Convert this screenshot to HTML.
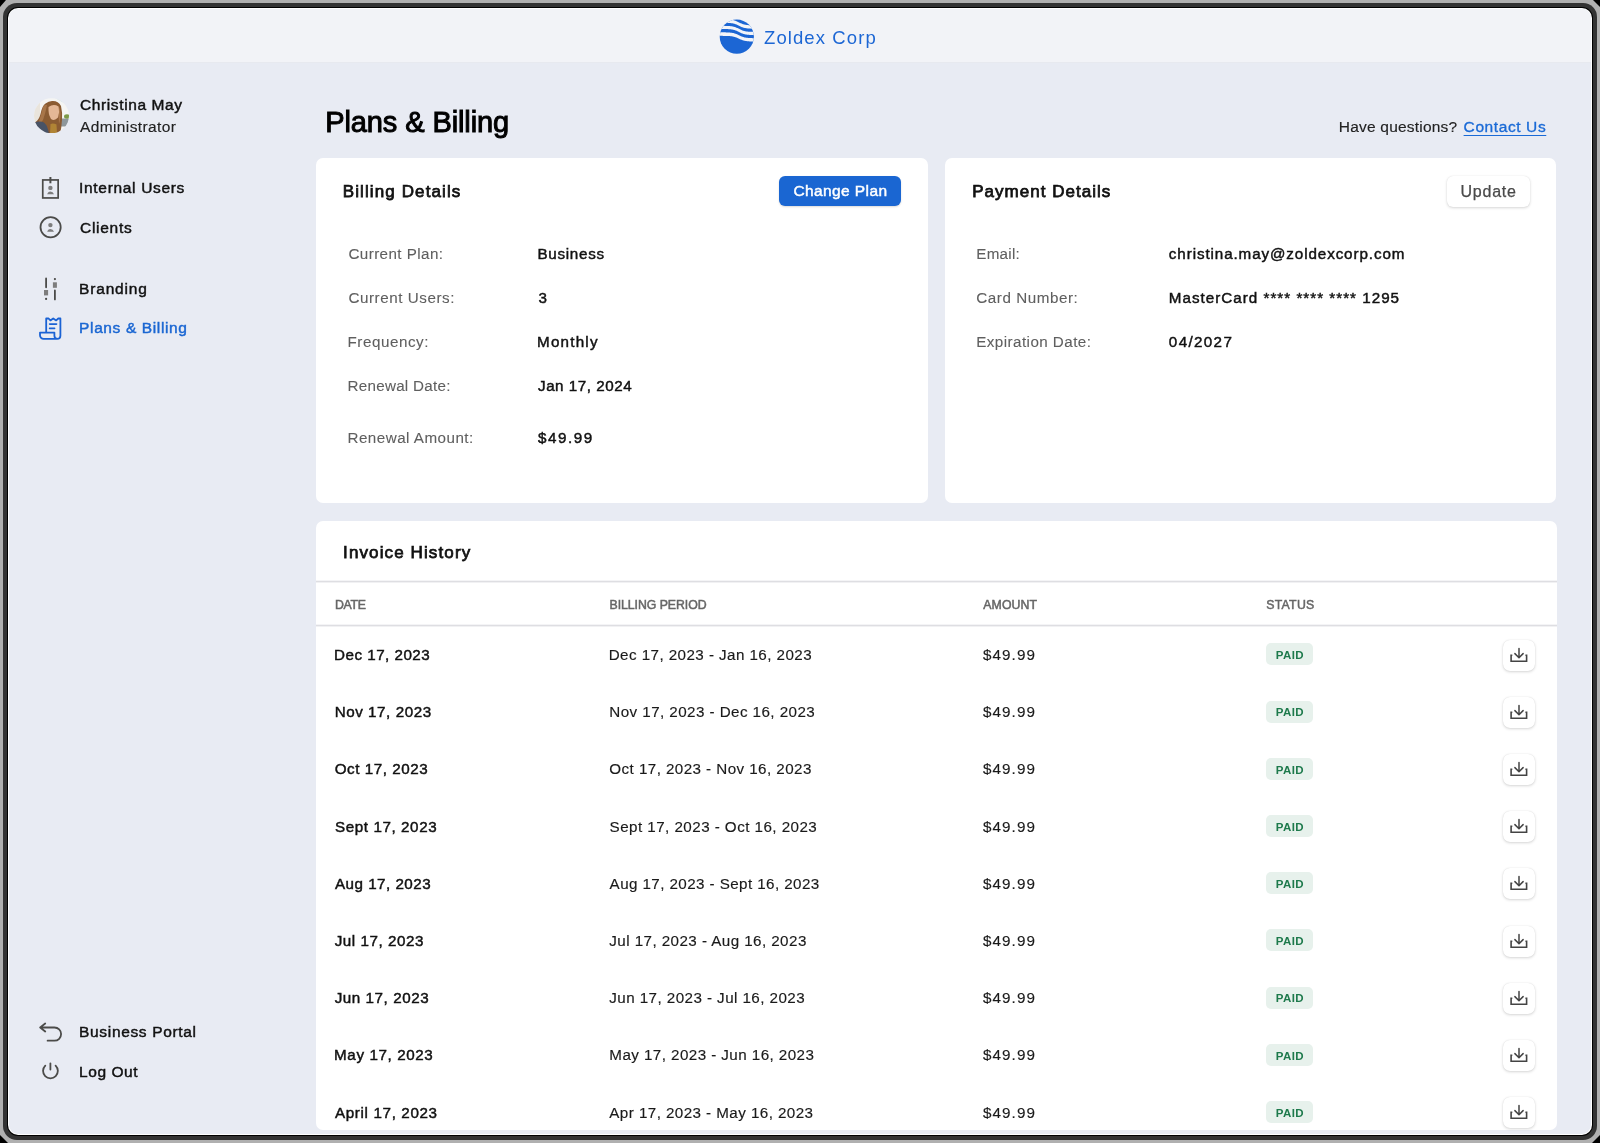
<!DOCTYPE html>
<html><head><meta charset="utf-8">
<style>
*{box-sizing:border-box;margin:0;padding:0}
html,body{width:1600px;height:1143px;overflow:hidden;background:#fff;font-family:"Liberation Sans",sans-serif;color:#111}
#shadow{position:absolute;left:0;top:0;width:1600px;height:1143px;background:#b0b0b0}
#shadow2{position:absolute;left:3px;top:3px;width:1594px;height:1137px;border-radius:14px;background:#333}
#frame{position:absolute;left:7px;top:7px;width:1586px;height:1129px;border-radius:11px;background:#000}
#win{position:absolute;left:8px;top:8px;width:1584px;height:1127px;border-radius:10px;background:#fff}
#app{position:absolute;left:9px;top:9px;width:1582px;height:1125px;border-radius:9px;background:#e8ebf3;overflow:hidden}
.corner{position:absolute;width:0;height:0}
#hdr{position:absolute;left:0;top:0;width:1582px;height:54px;background:#f2f3f7;border-bottom:1px solid #e7e9ef}
#content{position:absolute;left:0;top:0;width:1600px;height:1143px;clip-path:inset(9px 9px 9px 9px round 9px);will-change:transform}
.t{position:absolute;white-space:nowrap;line-height:1}
.logo{color:#1c66d4}
.nav{-webkit-text-stroke:0.45px #111;color:#111}
.nav.blue{color:#1a66d2;-webkit-text-stroke:0.45px #1a66d2}
.sub{color:#222;-webkit-text-stroke:0.15px #222}
.link{color:#1a6ad6;text-decoration:underline;text-underline-offset:2.5px;text-decoration-thickness:1.25px;-webkit-text-stroke:0.35px #1a6ad6}
.title{-webkit-text-stroke:1px #000;color:#000}
.card{position:absolute;background:#fff;border-radius:7px}
.ctitle{-webkit-text-stroke:0.75px #111;color:#111}
.lbl{color:#5f5f5f;-webkit-text-stroke:0.1px #5f5f5f}
.val{-webkit-text-stroke:0.45px #111;color:#111}
.th{color:#666;-webkit-text-stroke:0.5px #666}
.rd{-webkit-text-stroke:0.45px #111;color:#111}
.rp{color:#1a1a1a;-webkit-text-stroke:0.15px #1a1a1a}
.btn{position:absolute;background:#1a66d2;border-radius:6px;box-shadow:0 1px 2px rgba(0,0,0,0.15)}
.btnt{color:#fff;-webkit-text-stroke:0.45px #fff}
.btn2{position:absolute;background:#fff;border-radius:6px;box-shadow:0 1px 3px rgba(0,0,0,0.16),0 0 1px rgba(0,0,0,0.1)}
.btn2t{color:#4a4a4a;-webkit-text-stroke:0.25px #4a4a4a}
.badge{position:absolute;width:47px;height:22px;border-radius:5px;background:#e7f1ec}
.badget{color:#1e7a4c;font-weight:700}
.dl{position:absolute;width:32px;height:31px;border-radius:7px;background:#fff;box-shadow:0 1px 3px rgba(0,0,0,0.16),0 0 1px rgba(0,0,0,0.12)}
.dl svg{position:absolute;left:0;top:0}
.hr{position:absolute;height:1px;background:#dedee2;box-shadow:0 1px 0 #f1f1f3,0 -1px 0 #f4f4f6}
.ic{position:absolute;left:0;top:0}
.logo{font-size:18.5px;letter-spacing:0.3px;color:#1c66d4}
.avatar{position:absolute;width:35px;height:35.5px;border-radius:50%;overflow:hidden;background:radial-gradient(circle at 55% 45%,#e8c4a8 0,#d9a784 18%,#8a5a34 34%,#6b4526 50%,transparent 51%),linear-gradient(90deg,#f4f4f2 0,#f0f0ee 60%,#dfe6e6 100%)}
</style></head>
<body>
<div id="shadow"></div><svg style="position:absolute;left:0;top:0" width="1600" height="1143"><polygon points="0,0 6,0 0,7" fill="#000"/><polygon points="1593,0 1600,0 1600,7" fill="#000"/><polygon points="0,1135 0,1143 8,1143" fill="#000"/><polygon points="1600,1135 1600,1143 1592,1143" fill="#000"/></svg><div id="shadow2"></div>
<div id="frame"></div>
<div id="win"></div>
<div id="app"><div id="hdr"></div></div>
<div id="content">
<svg class="ic" style="left:715px;top:15px" width="45" height="43" viewBox="0 0 45 43"><defs><clipPath id="lc"><circle cx="21.8" cy="21.7" r="17.1"/></clipPath></defs><g clip-path="url(#lc)"><rect x="0" y="0" width="45" height="43" fill="#1c66d4"/><polygon points="0.0,4.40 0.5,4.40 1.0,4.40 1.5,4.40 2.0,4.40 2.5,4.40 3.0,4.41 3.5,4.41 4.0,4.41 4.5,4.41 5.0,4.41 5.5,4.41 6.0,4.41 6.5,4.42 7.0,4.42 7.5,4.42 8.0,4.43 8.5,4.43 9.0,4.44 9.5,4.45 10.0,4.46 10.5,4.47 11.0,4.48 11.5,4.49 12.0,4.51 12.5,4.53 13.0,4.55 13.5,4.58 14.0,4.61 14.5,4.64 15.0,4.68 15.5,4.73 16.0,4.79 16.5,4.86 17.0,4.93 17.5,5.02 18.0,5.12 18.5,5.23 19.0,5.35 19.5,5.49 20.0,5.65 20.5,5.82 21.0,6.01 21.5,6.22 22.0,6.44 22.5,6.67 23.0,6.90 23.5,7.15 24.0,7.40 24.5,7.65 25.0,7.90 25.5,8.13 26.0,8.36 26.5,8.58 27.0,8.79 27.5,8.98 28.0,9.15 28.5,9.31 29.0,9.45 29.5,9.57 30.0,9.68 30.5,9.78 31.0,9.87 31.5,9.94 32.0,10.01 32.5,10.07 33.0,10.12 33.5,10.16 34.0,10.19 34.5,10.22 35.0,10.25 35.5,10.27 36.0,10.29 36.5,10.31 37.0,10.32 37.5,10.33 38.0,10.34 38.5,10.35 39.0,10.36 39.5,10.37 40.0,10.37 40.5,10.38 41.0,10.38 41.5,10.38 42.0,10.39 42.5,10.39 43.0,10.39 43.5,10.39 44.0,10.39 44.5,10.39 44.5,13.73 44.0,13.73 43.5,13.73 43.0,13.73 42.5,13.73 42.0,13.73 41.5,13.72 41.0,13.72 40.5,13.72 40.0,13.71 39.5,13.71 39.0,13.70 38.5,13.69 38.0,13.68 37.5,13.67 37.0,13.66 36.5,13.65 36.0,13.63 35.5,13.61 35.0,13.59 34.5,13.56 34.0,13.53 33.5,13.50 33.0,13.46 32.5,13.41 32.0,13.35 31.5,13.28 31.0,13.21 30.5,13.12 30.0,13.02 29.5,12.91 29.0,12.79 28.5,12.65 28.0,12.49 27.5,12.32 27.0,12.13 26.5,11.92 26.0,11.70 25.5,11.47 25.0,11.24 24.5,10.99 24.0,10.74 23.5,10.49 23.0,10.24 22.5,10.01 22.0,9.78 21.5,9.56 21.0,9.35 20.5,9.16 20.0,8.99 19.5,8.83 19.0,8.69 18.5,8.57 18.0,8.46 17.5,8.36 17.0,8.27 16.5,8.20 16.0,8.13 15.5,8.07 15.0,8.02 14.5,7.98 14.0,7.95 13.5,7.92 13.0,7.89 12.5,7.87 12.0,7.85 11.5,7.83 11.0,7.82 10.5,7.81 10.0,7.80 9.5,7.79 9.0,7.78 8.5,7.77 8.0,7.77 7.5,7.76 7.0,7.76 6.5,7.76 6.0,7.75 5.5,7.75 5.0,7.75 4.5,7.75 4.0,7.75 3.5,7.75 3.0,7.75 2.5,7.74 2.0,7.74 1.5,7.74 1.0,7.74 0.5,7.74 0.0,7.74" fill="#f3f4f8"/><polygon points="0.0,10.82 0.5,10.82 1.0,10.82 1.5,10.82 2.0,10.82 2.5,10.82 3.0,10.83 3.5,10.83 4.0,10.83 4.5,10.83 5.0,10.83 5.5,10.83 6.0,10.84 6.5,10.84 7.0,10.84 7.5,10.84 8.0,10.85 8.5,10.85 9.0,10.86 9.5,10.87 10.0,10.88 10.5,10.89 11.0,10.90 11.5,10.91 12.0,10.93 12.5,10.95 13.0,10.97 13.5,11.00 14.0,11.03 14.5,11.07 15.0,11.11 15.5,11.16 16.0,11.22 16.5,11.28 17.0,11.36 17.5,11.45 18.0,11.55 18.5,11.66 19.0,11.79 19.5,11.93 20.0,12.09 20.5,12.27 21.0,12.46 21.5,12.67 22.0,12.89 22.5,13.12 23.0,13.37 23.5,13.62 24.0,13.87 24.5,14.12 25.0,14.37 25.5,14.62 26.0,14.85 26.5,15.07 27.0,15.28 27.5,15.47 28.0,15.65 28.5,15.81 29.0,15.95 29.5,16.08 30.0,16.19 30.5,16.29 31.0,16.38 31.5,16.46 32.0,16.52 32.5,16.58 33.0,16.63 33.5,16.67 34.0,16.71 34.5,16.74 35.0,16.77 35.5,16.79 36.0,16.81 36.5,16.83 37.0,16.84 37.5,16.85 38.0,16.86 38.5,16.87 39.0,16.88 39.5,16.89 40.0,16.89 40.5,16.90 41.0,16.90 41.5,16.90 42.0,16.90 42.5,16.91 43.0,16.91 43.5,16.91 44.0,16.91 44.5,16.91 44.5,20.06 44.0,20.06 43.5,20.06 43.0,20.06 42.5,20.06 42.0,20.05 41.5,20.05 41.0,20.05 40.5,20.05 40.0,20.04 39.5,20.04 39.0,20.03 38.5,20.02 38.0,20.01 37.5,20.00 37.0,19.99 36.5,19.98 36.0,19.96 35.5,19.94 35.0,19.92 34.5,19.89 34.0,19.86 33.5,19.82 33.0,19.78 32.5,19.73 32.0,19.67 31.5,19.61 31.0,19.53 30.5,19.44 30.0,19.34 29.5,19.23 29.0,19.10 28.5,18.96 28.0,18.80 27.5,18.62 27.0,18.43 26.5,18.22 26.0,18.00 25.5,17.77 25.0,17.52 24.5,17.27 24.0,17.02 23.5,16.77 23.0,16.52 22.5,16.27 22.0,16.04 21.5,15.82 21.0,15.61 20.5,15.42 20.0,15.24 19.5,15.08 19.0,14.94 18.5,14.81 18.0,14.70 17.5,14.60 17.0,14.51 16.5,14.43 16.0,14.37 15.5,14.31 15.0,14.26 14.5,14.22 14.0,14.18 13.5,14.15 13.0,14.12 12.5,14.10 12.0,14.08 11.5,14.06 11.0,14.05 10.5,14.04 10.0,14.03 9.5,14.02 9.0,14.01 8.5,14.00 8.0,14.00 7.5,13.99 7.0,13.99 6.5,13.99 6.0,13.99 5.5,13.98 5.0,13.98 4.5,13.98 4.0,13.98 3.5,13.98 3.0,13.98 2.5,13.97 2.0,13.97 1.5,13.97 1.0,13.97 0.5,13.97 0.0,13.97" fill="#f3f4f8"/><polygon points="0.0,17.30 0.5,17.30 1.0,17.30 1.5,17.30 2.0,17.30 2.5,17.30 3.0,17.31 3.5,17.31 4.0,17.31 4.5,17.31 5.0,17.31 5.5,17.31 6.0,17.31 6.5,17.32 7.0,17.32 7.5,17.32 8.0,17.33 8.5,17.33 9.0,17.34 9.5,17.35 10.0,17.35 10.5,17.36 11.0,17.38 11.5,17.39 12.0,17.41 12.5,17.42 13.0,17.45 13.5,17.47 14.0,17.50 14.5,17.54 15.0,17.58 15.5,17.63 16.0,17.68 16.5,17.75 17.0,17.82 17.5,17.91 18.0,18.00 18.5,18.11 19.0,18.24 19.5,18.38 20.0,18.53 20.5,18.70 21.0,18.89 21.5,19.09 22.0,19.30 22.5,19.53 23.0,19.76 23.5,20.00 24.0,20.25 24.5,20.50 25.0,20.74 25.5,20.97 26.0,21.20 26.5,21.41 27.0,21.61 27.5,21.80 28.0,21.97 28.5,22.12 29.0,22.26 29.5,22.39 30.0,22.50 30.5,22.59 31.0,22.68 31.5,22.75 32.0,22.82 32.5,22.87 33.0,22.92 33.5,22.96 34.0,23.00 34.5,23.03 35.0,23.05 35.5,23.08 36.0,23.09 36.5,23.11 37.0,23.12 37.5,23.14 38.0,23.15 38.5,23.15 39.0,23.16 39.5,23.17 40.0,23.17 40.5,23.18 41.0,23.18 41.5,23.18 42.0,23.19 42.5,23.19 43.0,23.19 43.5,23.19 44.0,23.19 44.5,23.19 44.5,26.54 44.0,26.54 43.5,26.54 43.0,26.54 42.5,26.54 42.0,26.54 41.5,26.53 41.0,26.53 40.5,26.53 40.0,26.52 39.5,26.52 39.0,26.51 38.5,26.50 38.0,26.50 37.5,26.49 37.0,26.48 36.5,26.46 36.0,26.45 35.5,26.43 35.0,26.41 34.5,26.38 34.0,26.35 33.5,26.32 33.0,26.28 32.5,26.23 32.0,26.18 31.5,26.12 31.0,26.05 30.5,25.96 30.0,25.87 29.5,25.76 29.0,25.64 28.5,25.51 28.0,25.36 27.5,25.20 27.0,25.02 26.5,24.82 26.0,24.62 25.5,24.40 25.0,24.17 24.5,23.94 24.0,23.70 23.5,23.46 23.0,23.23 22.5,23.00 22.0,22.78 21.5,22.58 21.0,22.38 20.5,22.20 20.0,22.04 19.5,21.89 19.0,21.76 18.5,21.64 18.0,21.53 17.5,21.44 17.0,21.35 16.5,21.28 16.0,21.22 15.5,21.17 15.0,21.12 14.5,21.08 14.0,21.05 13.5,21.02 13.0,20.99 12.5,20.97 12.0,20.95 11.5,20.94 11.0,20.92 10.5,20.91 10.0,20.90 9.5,20.90 9.0,20.89 8.5,20.88 8.0,20.88 7.5,20.87 7.0,20.87 6.5,20.87 6.0,20.86 5.5,20.86 5.0,20.86 4.5,20.86 4.0,20.86 3.5,20.86 3.0,20.86 2.5,20.85 2.0,20.85 1.5,20.85 1.0,20.85 0.5,20.85 0.0,20.85" fill="#f3f4f8"/></g></svg>
<div id="logo" class="t logo" style="left:764.00px;top:29.34px;font-size:18.5px;letter-spacing:1.093px;">Zoldex Corp</div>
<svg class="ic" style="left:33.5px;top:97.5px" width="35" height="35.5" viewBox="0 0 35 35.5"><defs><clipPath id="av"><circle cx="17.5" cy="17.75" r="17.5"/></clipPath><filter id="avb" x="-10%" y="-10%" width="120%" height="120%"><feGaussianBlur stdDeviation="0.5"/></filter></defs><g clip-path="url(#av)"><rect width="35" height="36" fill="#f5f5f3"/><g filter="url(#avb)"><rect x="0" y="0" width="6" height="36" fill="#e9e4dc"/><path d="M21 0H35V7L28 4Z" fill="#cfe3e3"/><path d="M27 20.5H35V28.5H27Z" fill="#8e979b"/><ellipse cx="33" cy="18.5" rx="3" ry="2.2" fill="#7c9a48"/><path d="M18 3Q24 2.5 27 8Q28.5 14 28 22Q27.5 30 26 36H2Q0.5 30 1 24.5Q5 22 6.5 16Q8 8 11.5 5.5Q14.5 3.2 18 3Z" fill="#8b5b33"/><path d="M9 9Q11 6 13 7Q11.5 15 9 22Q6.5 26 3.5 27Q6.5 20 9 9Z" fill="#a8764a"/><path d="M24.5 8Q27 12 26.5 19Q26 24 25 26Q24.5 18 24.5 8Z" fill="#a8764a"/><path d="M14.5 9Q19.5 5.5 24.5 8.5Q26 14 24 19.5Q20.5 23.5 17 21Q14 16 14.5 9Z" fill="#e4b896"/><path d="M0 25Q5 22.5 10 24.5Q14 28 15 36H0Z" fill="#4a5366"/><path d="M16.5 26Q19.5 25 22.5 26.5L23 36H16Z" fill="#b08436"/></g></g></svg>
<div id="cm" class="t nav" style="left:80.00px;top:96.88px;font-size:15.5px;letter-spacing:0.613px;">Christina May</div>
<div id="adm" class="t sub" style="left:80.00px;top:118.63px;font-size:15.5px;letter-spacing:0.387px;">Administrator</div>
<div id="n1" class="t nav" style="left:79.10px;top:180.08px;font-size:15.5px;letter-spacing:0.673px;">Internal Users</div>
<div id="n2" class="t nav" style="left:80.00px;top:219.68px;font-size:15.5px;letter-spacing:0.725px;">Clients</div>
<div id="n3" class="t nav" style="left:79.10px;top:281.08px;font-size:15.5px;letter-spacing:0.821px;">Branding</div>
<div id="n4" class="t nav blue" style="left:79.10px;top:320.48px;font-size:15.5px;letter-spacing:0.625px;">Plans &amp; Billing</div>
<div id="n5" class="t nav" style="left:79.10px;top:1024.38px;font-size:15.5px;letter-spacing:0.661px;">Business Portal</div>
<div id="n6" class="t nav" style="left:79.10px;top:1064.38px;font-size:15.5px;letter-spacing:0.538px;">Log Out</div>
<svg class="ic" style="left:36px;top:172px" width="30" height="30" viewBox="0 0 30 30"><rect x="6.75" y="7.95" width="15.4" height="18" fill="none" stroke="#4b4b49" stroke-width="1.7"/><path d="M14.4 5V11.3" stroke="#4b4b49" stroke-width="2"/><circle cx="14.4" cy="15.9" r="2.2" fill="#7d7d7d"/><path d="M11.2 22.3Q11.8 19.4 14.4 19.4Q17 19.4 18 22.3Z" fill="#7d7d7d"/></svg>
<svg class="ic" style="left:36px;top:212px" width="30" height="30" viewBox="0 0 30 30"><circle cx="14.6" cy="15.3" r="10.1" fill="none" stroke="#4b4b49" stroke-width="1.8"/><circle cx="14.4" cy="13.1" r="2.2" fill="#7d7d7d"/><path d="M11.2 19.8Q11.8 16.9 14.4 16.9Q17 16.9 18 19.8Z" fill="#7d7d7d"/></svg>
<svg class="ic" style="left:36px;top:274px" width="30" height="30" viewBox="0 0 30 30"><path d="M10.1 4.4V13.3M18.9 16.5V25.4" stroke="#4b4b49" stroke-width="1.8" stroke-linecap="round"/><rect x="8" y="16" width="4.1" height="5.4" fill="#7d7d7d"/><rect x="16.9" y="8.3" width="4" height="5.5" fill="#7d7d7d"/><circle cx="10.1" cy="24.9" r="1.1" fill="#4b4b49"/><circle cx="18.9" cy="5.1" r="1.1" fill="#4b4b49"/></svg>
<svg class="ic" style="left:36px;top:314px" width="30" height="30" viewBox="0 0 30 30"><path d="M10.2 18.6V4.5H12.6L14.4 6.4L17.2 4.4L20.2 6.4L22.3 4.5H24.4V21.7A3.2 3.2 0 0 1 21.2 24.9H7.6A3.6 3.6 0 0 1 4 21.3V18.6H18.4V21.7A3.2 3.2 0 0 0 21.2 24.9" fill="none" stroke="#1a62d4" stroke-width="1.8" stroke-linejoin="round"/><path d="M13.6 10.1H20.6M13.6 14.4H18.6" stroke="#1a62d4" stroke-width="1.6" stroke-linecap="round"/></svg>
<svg class="ic" style="left:34px;top:1016px" width="30" height="30" viewBox="0 0 30 30"><path d="M11.2 7.5L6.2 11.5L11.2 15.5M6.2 11.5H20.5A6.6 6.6 0 0 1 20.5 24.7H13.6" fill="none" stroke="#4b4b49" stroke-width="1.8" stroke-linecap="round" stroke-linejoin="round"/></svg>
<svg class="ic" style="left:34px;top:1056px" width="30" height="30" viewBox="0 0 30 30"><path d="M11.3 9.6A7.4 7.4 0 1 0 21.6 9.6M16.4 7.3V13.5" fill="none" stroke="#4b4b49" stroke-width="1.8" stroke-linecap="round"/></svg>
<div id="title" class="t title" style="left:325.20px;top:107.95px;font-size:29px;letter-spacing:-0.100px;">Plans &amp; Billing</div>
<div id="hq" class="t sub" style="left:1338.85px;top:119.18px;font-size:15.5px;letter-spacing:0.204px;">Have questions?</div>
<div id="cu" class="t link" style="left:1463.60px;top:119.18px;font-size:15.5px;letter-spacing:0.600px;">Contact Us</div>
<div class="card" style="left:316px;top:158px;width:611.5px;height:345px"></div>
<div class="card" style="left:944.6px;top:158px;width:611.7px;height:345px"></div>
<div class="card" style="left:316px;top:521px;width:1240.5px;height:609px"></div>
<div id="bd" class="t ctitle" style="left:342.70px;top:183.21px;font-size:17px;letter-spacing:1.114px;">Billing Details</div>
<div class="btn" style="left:779px;top:176px;width:122px;height:30px"></div>
<div id="cp" class="t btnt" style="left:793.40px;top:183.08px;font-size:15.5px;letter-spacing:0.410px;">Change Plan</div>
<div id="l1" class="t lbl" style="left:348.40px;top:245.93px;font-size:15.2px;letter-spacing:0.425px;">Current Plan:</div>
<div id="v1" class="t val" style="left:537.50px;top:245.93px;font-size:15.2px;letter-spacing:0.707px;">Business</div>
<div id="l2" class="t lbl" style="left:348.40px;top:290.03px;font-size:15.2px;letter-spacing:0.558px;">Current Users:</div>
<div id="v2" class="t val" style="left:538.60px;top:290.03px;font-size:15.2px;letter-spacing:0.450px;">3</div>
<div id="l3" class="t lbl" style="left:347.50px;top:334.03px;font-size:15.2px;letter-spacing:0.550px;">Frequency:</div>
<div id="v3" class="t val" style="left:537.10px;top:334.03px;font-size:15.2px;letter-spacing:1.200px;">Monthly</div>
<div id="l4" class="t lbl" style="left:347.50px;top:377.93px;font-size:15.2px;letter-spacing:0.275px;">Renewal Date:</div>
<div id="v4" class="t val" style="left:538.00px;top:377.93px;font-size:15.2px;letter-spacing:0.532px;">Jan 17, 2024</div>
<div id="l5" class="t lbl" style="left:347.50px;top:429.53px;font-size:15.2px;letter-spacing:0.479px;">Renewal Amount:</div>
<div id="v5" class="t val" style="left:538.00px;top:429.53px;font-size:15.2px;letter-spacing:1.530px;">$49.99</div>
<div id="pd" class="t ctitle" style="left:972.25px;top:183.21px;font-size:17px;letter-spacing:1.018px;">Payment Details</div>
<div class="btn2" style="left:1447px;top:176px;width:83px;height:31px"></div>
<div id="up" class="t btn2t" style="left:1460.55px;top:183.66px;font-size:16px;letter-spacing:0.760px;">Update</div>
<div id="pl1" class="t lbl" style="left:976.25px;top:245.93px;font-size:15.2px;letter-spacing:0.260px;">Email:</div>
<div id="pv1" class="t val" style="left:1168.85px;top:245.93px;font-size:15.2px;letter-spacing:0.900px;">christina.may@zoldexcorp.com</div>
<div id="pl2" class="t lbl" style="left:976.25px;top:290.03px;font-size:15.2px;letter-spacing:0.555px;">Card Number:</div>
<div id="pv2" class="t val" style="left:1168.85px;top:290.03px;font-size:15.2px;letter-spacing:1.009px;">MasterCard **** **** **** 1295</div>
<div id="pl3" class="t lbl" style="left:976.25px;top:334.03px;font-size:15.2px;letter-spacing:0.440px;">Expiration Date:</div>
<div id="pv3" class="t val" style="left:1168.85px;top:334.03px;font-size:15.2px;letter-spacing:1.350px;">04/2027</div>
<div id="ih" class="t ctitle" style="left:343.10px;top:543.61px;font-size:17px;letter-spacing:1.114px;">Invoice History</div>
<div class="hr" style="left:316px;top:581px;width:1240.5px;height:1px"></div>
<div class="hr" style="left:316px;top:625px;width:1240.5px;height:1px"></div>
<div id="h1" class="t th" style="left:335.00px;top:598.59px;font-size:12.3px;letter-spacing:-0.300px;">DATE</div>
<div id="h2" class="t th" style="left:609.50px;top:598.59px;font-size:12.3px;letter-spacing:-0.046px;">BILLING PERIOD</div>
<div id="h3" class="t th" style="left:983.28px;top:598.59px;font-size:12.3px;letter-spacing:0.084px;">AMOUNT</div>
<div id="h4" class="t th" style="left:1266.22px;top:598.59px;font-size:12.3px;letter-spacing:0.264px;">STATUS</div>
<div id="rd0" class="t rd" style="left:334.10px;top:647.03px;font-size:15.2px;letter-spacing:0.482px;">Dec 17, 2023</div>
<div id="rp0" class="t rp" style="left:608.70px;top:647.03px;font-size:15.2px;letter-spacing:0.433px;">Dec 17, 2023 - Jan 16, 2023</div>
<div id="ra0" class="t rp" style="left:983.00px;top:647.03px;font-size:15.2px;letter-spacing:1.080px;">$49.99</div>
<div class="badge" style="left:1266px;top:643.40px"></div>
<div id="pa0" class="t badget" style="left:1275.80px;top:650.27px;font-size:11.5px;letter-spacing:0.400px;">PAID</div>
<div class="dl" style="left:1502.6px;top:639.60px"><svg width="32" height="31" viewBox="0 0 32 31"><path d="M9.3 15.2H8.1V21.2H23.6V15.2H22.4" fill="none" stroke="#444" stroke-width="1.6"/><path d="M16 8.6V17.4M11.9 13.6L16 17.7L20.1 13.6" fill="none" stroke="#444" stroke-width="1.5" stroke-linecap="round" stroke-linejoin="round"/></svg></div>
<div id="rd1" class="t rd" style="left:334.64px;top:704.23px;font-size:15.2px;letter-spacing:0.560px;">Nov 17, 2023</div>
<div id="rp1" class="t rp" style="left:609.30px;top:704.23px;font-size:15.2px;letter-spacing:0.433px;">Nov 17, 2023 - Dec 16, 2023</div>
<div id="ra1" class="t rp" style="left:983.00px;top:704.23px;font-size:15.2px;letter-spacing:1.080px;">$49.99</div>
<div class="badge" style="left:1266px;top:700.60px"></div>
<div id="pa1" class="t badget" style="left:1275.80px;top:707.47px;font-size:11.5px;letter-spacing:0.400px;">PAID</div>
<div class="dl" style="left:1502.6px;top:696.80px"><svg width="32" height="31" viewBox="0 0 32 31"><path d="M9.3 15.2H8.1V21.2H23.6V15.2H22.4" fill="none" stroke="#444" stroke-width="1.6"/><path d="M16 8.6V17.4M11.9 13.6L16 17.7L20.1 13.6" fill="none" stroke="#444" stroke-width="1.5" stroke-linecap="round" stroke-linejoin="round"/></svg></div>
<div id="rd2" class="t rd" style="left:334.64px;top:761.43px;font-size:15.2px;letter-spacing:0.560px;">Oct 17, 2023</div>
<div id="rp2" class="t rp" style="left:609.30px;top:761.43px;font-size:15.2px;letter-spacing:0.433px;">Oct 17, 2023 - Nov 16, 2023</div>
<div id="ra2" class="t rp" style="left:983.00px;top:761.43px;font-size:15.2px;letter-spacing:1.080px;">$49.99</div>
<div class="badge" style="left:1266px;top:757.80px"></div>
<div id="pa2" class="t badget" style="left:1275.80px;top:764.67px;font-size:11.5px;letter-spacing:0.400px;">PAID</div>
<div class="dl" style="left:1502.6px;top:754.00px"><svg width="32" height="31" viewBox="0 0 32 31"><path d="M9.3 15.2H8.1V21.2H23.6V15.2H22.4" fill="none" stroke="#444" stroke-width="1.6"/><path d="M16 8.6V17.4M11.9 13.6L16 17.7L20.1 13.6" fill="none" stroke="#444" stroke-width="1.5" stroke-linecap="round" stroke-linejoin="round"/></svg></div>
<div id="rd3" class="t rd" style="left:335.00px;top:818.63px;font-size:15.2px;letter-spacing:0.588px;">Sept 17, 2023</div>
<div id="rp3" class="t rp" style="left:609.60px;top:818.63px;font-size:15.2px;letter-spacing:0.450px;">Sept 17, 2023 - Oct 16, 2023</div>
<div id="ra3" class="t rp" style="left:983.00px;top:818.63px;font-size:15.2px;letter-spacing:1.080px;">$49.99</div>
<div class="badge" style="left:1266px;top:815.00px"></div>
<div id="pa3" class="t badget" style="left:1275.80px;top:821.87px;font-size:11.5px;letter-spacing:0.400px;">PAID</div>
<div class="dl" style="left:1502.6px;top:811.20px"><svg width="32" height="31" viewBox="0 0 32 31"><path d="M9.3 15.2H8.1V21.2H23.6V15.2H22.4" fill="none" stroke="#444" stroke-width="1.6"/><path d="M16 8.6V17.4M11.9 13.6L16 17.7L20.1 13.6" fill="none" stroke="#444" stroke-width="1.5" stroke-linecap="round" stroke-linejoin="round"/></svg></div>
<div id="rd4" class="t rd" style="left:335.00px;top:875.83px;font-size:15.2px;letter-spacing:0.482px;">Aug 17, 2023</div>
<div id="rp4" class="t rp" style="left:609.60px;top:875.83px;font-size:15.2px;letter-spacing:0.417px;">Aug 17, 2023 - Sept 16, 2023</div>
<div id="ra4" class="t rp" style="left:983.00px;top:875.83px;font-size:15.2px;letter-spacing:1.080px;">$49.99</div>
<div class="badge" style="left:1266px;top:872.20px"></div>
<div id="pa4" class="t badget" style="left:1275.80px;top:879.07px;font-size:11.5px;letter-spacing:0.400px;">PAID</div>
<div class="dl" style="left:1502.6px;top:868.40px"><svg width="32" height="31" viewBox="0 0 32 31"><path d="M9.3 15.2H8.1V21.2H23.6V15.2H22.4" fill="none" stroke="#444" stroke-width="1.6"/><path d="M16 8.6V17.4M11.9 13.6L16 17.7L20.1 13.6" fill="none" stroke="#444" stroke-width="1.5" stroke-linecap="round" stroke-linejoin="round"/></svg></div>
<div id="rd5" class="t rd" style="left:334.64px;top:933.03px;font-size:15.2px;letter-spacing:0.560px;">Jul 17, 2023</div>
<div id="rp5" class="t rp" style="left:609.30px;top:933.03px;font-size:15.2px;letter-spacing:0.433px;">Jul 17, 2023 - Aug 16, 2023</div>
<div id="ra5" class="t rp" style="left:983.00px;top:933.03px;font-size:15.2px;letter-spacing:1.080px;">$49.99</div>
<div class="badge" style="left:1266px;top:929.40px"></div>
<div id="pa5" class="t badget" style="left:1275.80px;top:936.27px;font-size:11.5px;letter-spacing:0.400px;">PAID</div>
<div class="dl" style="left:1502.6px;top:925.60px"><svg width="32" height="31" viewBox="0 0 32 31"><path d="M9.3 15.2H8.1V21.2H23.6V15.2H22.4" fill="none" stroke="#444" stroke-width="1.6"/><path d="M16 8.6V17.4M11.9 13.6L16 17.7L20.1 13.6" fill="none" stroke="#444" stroke-width="1.5" stroke-linecap="round" stroke-linejoin="round"/></svg></div>
<div id="rd6" class="t rd" style="left:334.64px;top:990.23px;font-size:15.2px;letter-spacing:0.560px;">Jun 17, 2023</div>
<div id="rp6" class="t rp" style="left:609.30px;top:990.23px;font-size:15.2px;letter-spacing:0.433px;">Jun 17, 2023 - Jul 16, 2023</div>
<div id="ra6" class="t rp" style="left:983.00px;top:990.23px;font-size:15.2px;letter-spacing:1.080px;">$49.99</div>
<div class="badge" style="left:1266px;top:986.60px"></div>
<div id="pa6" class="t badget" style="left:1275.80px;top:993.47px;font-size:11.5px;letter-spacing:0.400px;">PAID</div>
<div class="dl" style="left:1502.6px;top:982.80px"><svg width="32" height="31" viewBox="0 0 32 31"><path d="M9.3 15.2H8.1V21.2H23.6V15.2H22.4" fill="none" stroke="#444" stroke-width="1.6"/><path d="M16 8.6V17.4M11.9 13.6L16 17.7L20.1 13.6" fill="none" stroke="#444" stroke-width="1.5" stroke-linecap="round" stroke-linejoin="round"/></svg></div>
<div id="rd7" class="t rd" style="left:334.10px;top:1047.43px;font-size:15.2px;letter-spacing:0.605px;">May 17, 2023</div>
<div id="rp7" class="t rp" style="left:609.30px;top:1047.43px;font-size:15.2px;letter-spacing:0.433px;">May 17, 2023 - Jun 16, 2023</div>
<div id="ra7" class="t rp" style="left:983.00px;top:1047.43px;font-size:15.2px;letter-spacing:1.080px;">$49.99</div>
<div class="badge" style="left:1266px;top:1043.80px"></div>
<div id="pa7" class="t badget" style="left:1275.80px;top:1050.67px;font-size:11.5px;letter-spacing:0.400px;">PAID</div>
<div class="dl" style="left:1502.6px;top:1040.00px"><svg width="32" height="31" viewBox="0 0 32 31"><path d="M9.3 15.2H8.1V21.2H23.6V15.2H22.4" fill="none" stroke="#444" stroke-width="1.6"/><path d="M16 8.6V17.4M11.9 13.6L16 17.7L20.1 13.6" fill="none" stroke="#444" stroke-width="1.5" stroke-linecap="round" stroke-linejoin="round"/></svg></div>
<div id="rd8" class="t rd" style="left:335.00px;top:1104.63px;font-size:15.2px;letter-spacing:0.642px;">April 17, 2023</div>
<div id="rp8" class="t rp" style="left:609.30px;top:1104.63px;font-size:15.2px;letter-spacing:0.433px;">Apr 17, 2023 - May 16, 2023</div>
<div id="ra8" class="t rp" style="left:983.00px;top:1104.63px;font-size:15.2px;letter-spacing:1.080px;">$49.99</div>
<div class="badge" style="left:1266px;top:1101.00px"></div>
<div id="pa8" class="t badget" style="left:1275.80px;top:1107.87px;font-size:11.5px;letter-spacing:0.400px;">PAID</div>
<div class="dl" style="left:1502.6px;top:1097.20px"><svg width="32" height="31" viewBox="0 0 32 31"><path d="M9.3 15.2H8.1V21.2H23.6V15.2H22.4" fill="none" stroke="#444" stroke-width="1.6"/><path d="M16 8.6V17.4M11.9 13.6L16 17.7L20.1 13.6" fill="none" stroke="#444" stroke-width="1.5" stroke-linecap="round" stroke-linejoin="round"/></svg></div>
</div>
</body></html>
